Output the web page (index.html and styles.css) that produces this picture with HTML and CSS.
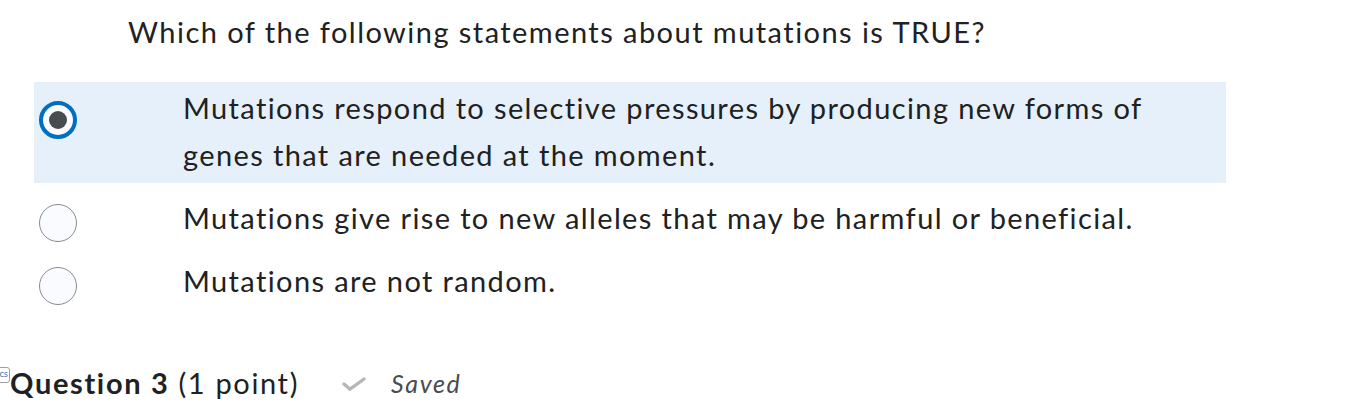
FILE: index.html
```html
<!DOCTYPE html>
<html>
<head>
<meta charset="utf-8">
<link rel="stylesheet" href="styles.css">
</head>
<body>
<div class="page">
  <div class="prompt">Which of the following statements about mutations is TRUE?</div>
  <div class="options">
    <div class="option selected">
      <div class="radio-col"><span class="radio checked"></span></div>
      <div class="label">Mutations respond to selective pressures by producing new forms of genes that are needed at the moment.</div>
    </div>
    <div class="option">
      <div class="radio-col"><span class="radio"></span></div>
      <div class="label">Mutations give rise to new alleles that may be harmful or beneficial.</div>
    </div>
    <div class="option">
      <div class="radio-col"><span class="radio"></span></div>
      <div class="label">Mutations are not random.</div>
    </div>
  </div>
  <div class="next">
    <span class="badge">cs</span>
    <h2 class="qtitle"><b>Question 3</b> (1 point)</h2>
    <span class="status">
      <svg class="check" width="24" height="14" viewBox="0 0 24 14"><path d="M2 7 L8 12.2 L22 2" fill="none" stroke="#b3b8bc" stroke-width="3.4" stroke-linecap="round" stroke-linejoin="round"/></svg>
      <span class="saved">Saved</span>
    </span>
  </div>
</div>
</body>
</html>
```
FILE: styles.css
```css
html, body {
  margin: 0;
  padding: 0;
  background: #ffffff;
}
body {
  font-family: Lato, "Open Sans", sans-serif;
  color: #202122;
  width: 1360px;
  height: 412px;
  overflow: hidden;
}
.page {
  position: relative;
}
.prompt {
  font-size: 29px;
  line-height: 47px;
  padding: 8px 0 0 128px;
  height: 72px;
  box-sizing: border-box;
  letter-spacing: 1.45px;
}
.options {
  display: flex;
  flex-direction: column;
  margin-top: 10px;
  margin-left: 34px;
  width: 1192px;
}
.option {
  display: flex;
  padding: 7px 0 8px 0;
}
.option.selected {
  background: #e6f0fa;
  padding: 2px 0 5px 0;
  margin-bottom: 4px;
}
.radio-col {
  width: 149px;
  flex: none;
  padding-left: 5px;
  box-sizing: border-box;
}
.radio {
  display: block;
  width: 38px;
  height: 38px;
  box-sizing: border-box;
  border-radius: 50%;
  border: 1px solid #868c8f;
  background: #f9fbff;
  margin-top: 10px;
  position: relative;
}
.option.selected .radio {
  margin-top: 17px;
}
.radio.checked {
  border: 4px solid #006fbf;
}
.radio.checked::after {
  content: "";
  position: absolute;
  left: 6px;
  top: 6px;
  width: 18px;
  height: 18px;
  border-radius: 50%;
  background: #494c4e;
}
.label {
  font-size: 29px;
  line-height: 47px;
  width: 1000px;
  letter-spacing: 1.38px;
}
.next {
  display: flex;
  align-items: center;
  margin-top: 50px;
  padding-left: 10px;
  position: relative;
}
.badge {
  position: absolute;
  left: -4px;
  top: 4px;
  width: 14px;
  height: 16px;
  box-sizing: border-box;
  border: 1px solid #9aa0a4;
  border-radius: 3px;
  background: #fff;
  font-size: 8px;
  line-height: 14px;
  color: #3d6fa8;
  text-align: right;
  padding-right: 1px;
  font-family: "DejaVu Sans", sans-serif;
  overflow: hidden;
  z-index: 1;
}
.qtitle {
  margin: 0;
  font-size: 29px;
  line-height: 40px;
  font-weight: 400;
  color: #202122;
  letter-spacing: 1.65px;
}
.qtitle b {
  font-weight: 700;
}
.status {
  display: flex;
  align-items: center;
  margin-left: 43px;
}
.check {
  display: block;
  margin-top: 2px;
}
.saved {
  font-style: italic;
  font-size: 25px;
  color: #494c4e;
  margin-left: 25px;
  letter-spacing: 1.6px;
}
```
